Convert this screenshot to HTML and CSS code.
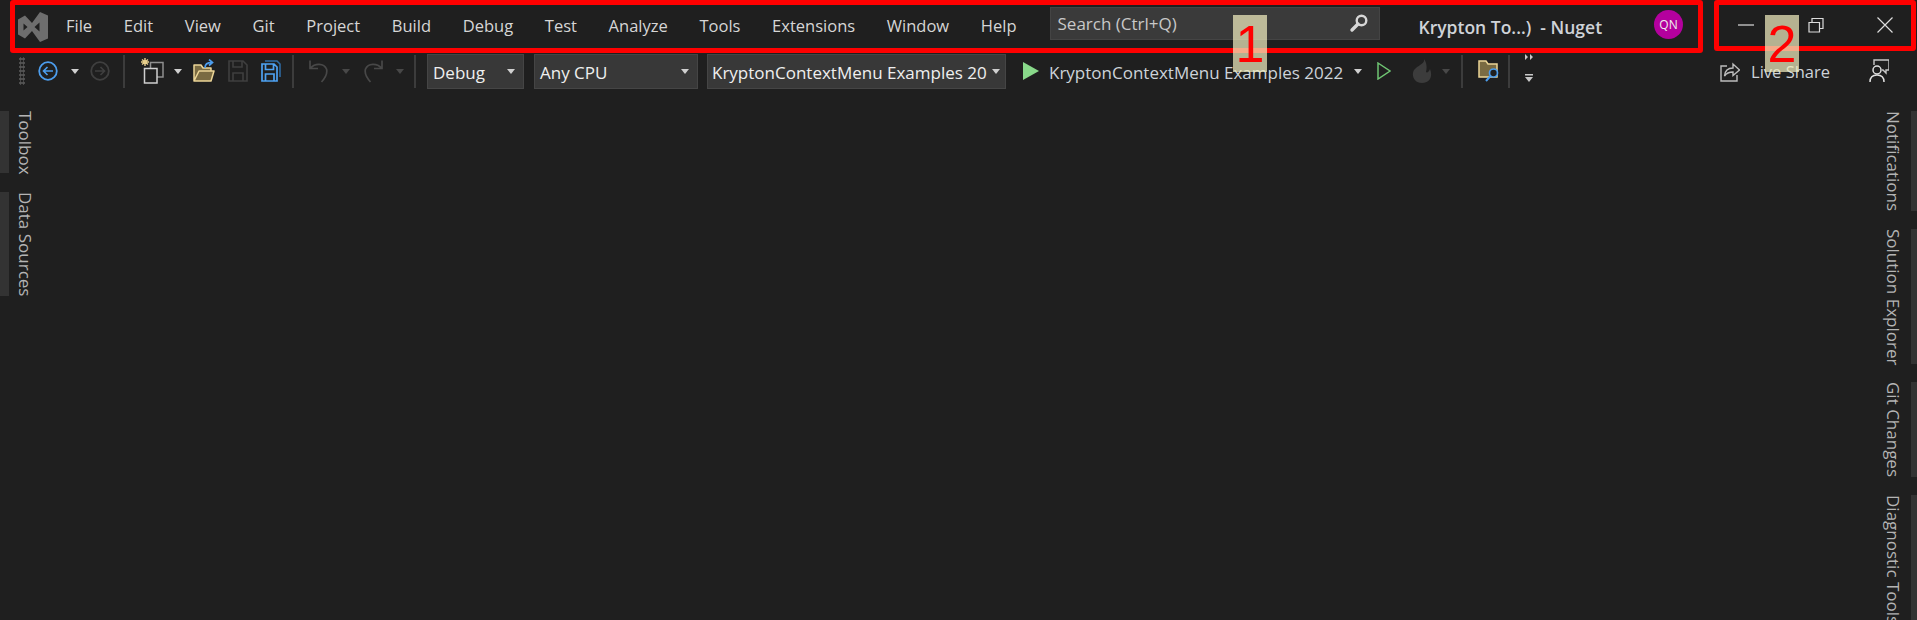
FILE: index.html

```html
<!DOCTYPE html>
<html lang="en">
<head>
    <meta charset="UTF-8">
    <meta name="viewport" content="width=device-width, initial-scale=1.0">
    <title>Krypton Toolkit - Nuget</title>
    <link rel="stylesheet" href="styles.css">
</head>
<body>
    <header class="titlebar">
        <svg class="logo" width="30" height="30" viewBox="0 0 30 30">
            <path fill="#6e6e6e" fill-rule="evenodd" d="M0 7.5 7 3.5 14 11 22 0 30 3.5V26.500L22 30 14 19 7 26.500 0 22.500ZM5.500 11.500V18.500L9.500 15ZM21.500 10.500 16.500 15 21.500 19.500Z"/>
        </svg>
        <nav class="menu">
            <span>File</span>
            <span>Edit</span>
            <span>View</span>
            <span>Git</span>
            <span>Project</span>
            <span>Build</span>
            <span>Debug</span>
            <span>Test</span>
            <span>Analyze</span>
            <span>Tools</span>
            <span>Extensions</span>
            <span>Window</span>
            <span>Help</span>
        </nav>
        <div class="search">
            <span>Search (Ctrl+Q)</span>
            <svg width="20" height="20" viewBox="0 0 20 20">
                <circle cx="12.500" cy="7.500" r="4.800" fill="none" stroke="#d6d6d6" stroke-width="2.400"/>
                <path d="M9 11 3 17" stroke="#d6d6d6" stroke-width="3.400" stroke-linecap="round"/>
            </svg>
        </div>
        <div class="doc-title">Krypton To...)&nbsp;&nbsp;- Nuget</div>
        <div class="avatar">QN</div>
        <div class="win-controls">
            <svg width="16" height="16" viewBox="0 0 16 16"><path d="M0 8H16" stroke="#dcdcdc" stroke-width="1.200"/></svg>
            <svg width="16" height="16" viewBox="0 0 16 16"><path d="M1 5.500H11.500V15H1ZM4 5.500V1.500H15V11.500H11.500" fill="none" stroke="#dcdcdc" stroke-width="1.200"/></svg>
            <svg width="16" height="16" viewBox="0 0 16 16"><path d="M0.500 0.500 15.500 15.500M15.500 0.500 0.500 15.500" stroke="#dcdcdc" stroke-width="1.200"/></svg>
        </div>
    </header>

    <div class="toolbar">
        <div class="grip"></div>
        <svg width="20" height="20" viewBox="0 0 20 20">
            <circle cx="10" cy="10" r="8.800" fill="none" stroke="#4c9ded" stroke-width="1.800"/>
            <path d="M15 10H6M9.500 6 5.500 10 9.500 14" fill="none" stroke="#4c9ded" stroke-width="1.600"/>
        </svg>
        <i class="caret"></i>
        <svg class="near" width="20" height="20" viewBox="0 0 20 20">
            <circle cx="10" cy="10" r="8.800" fill="none" stroke="#3f3f3f" stroke-width="1.800"/>
            <path d="M5 10H14M10.500 6 14.500 10 10.500 14" fill="none" stroke="#3f3f3f" stroke-width="1.600"/>
        </svg>
        <div class="sep"></div>
        <svg class="far" width="24" height="26" viewBox="0 0 24 26">
            <path d="M5 0V8M1 4H9M2 1.500 8 6.500M8 1.500 2 6.500" stroke="#e8cf8c" stroke-width="1.400"/>
            <path d="M10.500 4.500H23V19H10.500Z" fill="none" stroke="#8f8f8f" stroke-width="1.500"/>
            <path d="M4.500 10.500H17V25H4.500Z" fill="#1f1f1f" stroke="#cfcfcf" stroke-width="1.500"/>
        </svg>
        <i class="caret nearer"></i>
        <svg class="near" width="22" height="24" viewBox="0 0 22 24">
            <path d="M1 22V6H8L10 9H18V12H6L1 22H18L21 12H6" fill="#7a6b42" stroke="#ecd596" stroke-width="1.500" stroke-linejoin="round"/>
            <path d="M12 9C12 5 14 3.500 19 3.500M16 0.500 19.500 3.500 16 6.500" fill="none" stroke="#4c9ded" stroke-width="1.700"/>
        </svg>
        <svg width="20" height="22" viewBox="0 0 20 22">
            <path d="M1 1H15L19 5V21H1ZM5 1V7H14V1M5 21V13H15V21" fill="none" stroke="#3f3f3f" stroke-width="1.600"/>
        </svg>
        <svg width="20" height="22" viewBox="0 0 20 22">
            <path d="M4 1H16L19 4V17" fill="none" stroke="#2f6ea8" stroke-width="1.500"/>
            <path d="M1 4H13L16 7V21H1ZM4.500 4V9.500H12.500V4M4.500 21V14H13V21" fill="none" stroke="#4ea2f2" stroke-width="1.700"/>
        </svg>
        <div class="sep near"></div>
        <svg class="far" width="20" height="24" viewBox="0 0 20 24">
            <path d="M1 1.500V9.500H9M1.500 9C6 4 15 4 17.500 10C19 15 16 19 12.500 23" fill="none" stroke="#484848" stroke-width="1.700"/>
        </svg>
        <i class="caret dim"></i>
        <svg width="20" height="24" viewBox="0 0 20 24">
            <path d="M19 1.500V9.500H11M18.500 9C14 4 5 4 2.500 10C1 15 4 19 7.500 23" fill="none" stroke="#484848" stroke-width="1.700"/>
        </svg>
        <i class="caret dim"></i>
        <div class="sep nearer"></div>
        <div class="combo combo-debug near"><span>Debug</span><i class="caret"></i></div>
        <div class="combo combo-cpu nearer"><span>Any CPU</span><i class="caret"></i></div>
        <div class="combo combo-project nearest"><span>KryptonContextMenu Examples 20</span><i class="caret"></i></div>
        <svg class="farther" width="16" height="18" viewBox="0 0 16 18"><path d="M0 0 16 9 0 18Z" fill="#89d98a"/></svg>
        <span class="run-target nearer">KryptonContextMenu Examples 2022</span>
        <i class="caret near"></i>
        <svg class="far" width="14" height="18" viewBox="0 0 14 18"><path d="M1 1 13 9 1 17Z" fill="none" stroke="#6fc573" stroke-width="1.500"/></svg>
        <svg class="farthest" width="20" height="24" viewBox="0 0 20 24">
            <path d="M12 0C13 5 6 6 2 11C-1 16 2 24 10 24C18 24 21 17 18 10C17 13 15 14 14 13C15 9 15 4 12 0Z" fill="#3c3c3c"/>
        </svg>
        <i class="caret dim nearer"></i>
        <div class="sep near"></div>
        <svg class="far" width="22" height="24" viewBox="0 0 22 24">
            <path d="M1 18V2H8L10 5H19V18Z" fill="#7a6b42" stroke="#ecd596" stroke-width="1.500"/>
            <circle cx="15.500" cy="14" r="4" fill="#1f1f1f" stroke="#4c9ded" stroke-width="1.700"/>
            <path d="M12.500 17 8 22" stroke="#4c9ded" stroke-width="2"/>
        </svg>
        <div class="sep tightest"></div>
        <div class="overflow far">
            <svg width="8" height="6" viewBox="0 0 8 6"><path d="M0 0 3 3 0 6ZM5 0 8 3 5 6Z" fill="#c8c8c8"/></svg>
            <svg width="8" height="10" viewBox="0 0 8 10"><path d="M0 0H8V1.500H0ZM0 3H8L4 8Z" fill="#c8c8c8"/></svg>
        </div>
        <div class="share">
            <svg width="20" height="22" viewBox="0 0 20 22">
                <path d="M7 6H1V21H17V15M4.500 16C5 10 9 8 13 8V4L19.500 10 13 15.500V12C9 12 6.500 13 4.500 16Z" fill="none" stroke="#bdbdbd" stroke-width="1.400"/>
            </svg>
            <span>Live Share</span>
        </div>
        <svg class="feedback" width="20" height="24" viewBox="0 0 20 24">
            <path d="M5 6V1H20V11H17V14L14 11H13" fill="none" stroke="#c8c8c8" stroke-width="1.400"/>
            <circle cx="8" cy="11" r="4" fill="none" stroke="#e0e0e0" stroke-width="1.500"/>
            <path d="M1 23C1 18 4 16 8 16C12 16 15 18 15 23" fill="none" stroke="#e0e0e0" stroke-width="1.500"/>
        </svg>
    </div>

    <main class="workspace">
        <aside class="rail">
            <div class="side-tab tab-toolbox"><i></i><span>Toolbox</span></div>
            <div class="side-tab tab-sources"><i></i><span>Data Sources</span></div>
        </aside>
        <aside class="rail rail-right">
            <div class="side-tab tab-notify"><span>Notifications</span><i></i></div>
            <div class="side-tab tab-solution"><span>Solution Explorer</span><i></i></div>
            <div class="side-tab tab-git"><span>Git Changes</span><i></i></div>
            <div class="side-tab tab-diag"><span>Diagnostic Tools</span><i></i></div>
        </aside>
    </main>

    <!-- annotations drawn on top of the screenshot -->
    <div class="mark mark-one"></div>
    <div class="mark mark-two"></div>
    <div class="tag tag-one">1</div>
    <div class="tag tag-two">2</div>
</body>
</html>
```

FILE: styles.css

```css
* {
    box-sizing: border-box;
}
html, body {
    height: 100%;
}
body {
    margin: 0;
    position: relative;
    overflow: hidden;
    display: flex;
    flex-direction: column;
    background-color: #1f1f1f;
    color: #d6d6d6;
    font-family: "Open Sans", "Noto Sans", sans-serif;
    font-size: 16.5px;
}
svg {
    display: block;
    flex: none;
}

/* title bar */
.titlebar {
    height: 52px;
    flex: none;
    display: flex;
    align-items: center;
    padding-left: 18px;
}
.logo {
    margin-top: 1px;
}
.menu {
    display: flex;
    gap: 31.700px;
    margin-left: 18px;
    margin-bottom: 1px;
}
.search {
    width: 330px;
    height: 33px;
    margin: 0 0 5px 33px;
    padding: 0 10px 1px 7px;
    display: flex;
    align-items: center;
    justify-content: space-between;
    background-color: #3a3a3a;
    border: 1px solid #444;
    color: #c8c8c8;
    font-size: 17px;
}
.doc-title {
    margin-left: 39px;
    margin-top: 2px;
    font-size: 17.500px;
    font-weight: 600;
    color: #cfd3d8;
}
.avatar {
    width: 29px;
    height: 29px;
    margin: 0 0 4px auto;
    border-radius: 50%;
    display: flex;
    align-items: center;
    justify-content: center;
    background-color: #b4009e;
    color: #eee;
    font-size: 12px;
}
.win-controls {
    width: 234px;
    margin-bottom: 3px;
    padding: 0 24px 0 55px;
    display: flex;
    justify-content: space-between;
}

/* toolbar */
.toolbar {
    height: 38px;
    flex: none;
    display: flex;
    align-items: center;
    gap: 13px;
    padding: 0 28px 0 19px;
    font-size: 17px;
}
.grip {
    width: 6px;
    height: 28px;
    background-image: radial-gradient(#555 1px, transparent 1.500px);
    background-size: 3px 4px;
}
.caret {
    flex: none;
    width: 0;
    height: 0;
    border: 4px solid transparent;
    border-top: 5px solid #d0d0d0;
    border-bottom: 0;
}
.caret.dim {
    border-top-color: #484848;
}
.sep {
    width: 2px;
    height: 33px;
    flex: none;
    background-color: #3c3c3c;
}
.near {
    margin-left: -2px;
}
.nearer {
    margin-left: -3px;
}
.nearest {
    margin-left: -4px;
}
.tightest {
    margin-left: -5px;
}
.far {
    margin-left: 2px;
}
.farther {
    margin-left: 4px;
}
.farthest {
    margin-left: 8px;
}
.combo {
    height: 35px;
    flex: none;
    display: flex;
    align-items: center;
    justify-content: space-between;
    padding: 0 8px 0 5px;
    background-color: #383838;
    border: 1px solid #454545;
    color: #efefef;
    white-space: nowrap;
}
.combo span {
    padding-top: 2px;
}
.combo-debug {
    width: 97px;
}
.combo-cpu {
    width: 164px;
}
.combo-project {
    width: 299px;
    padding-left: 4px;
    padding-right: 5px;
}
.run-target {
    padding-top: 2px;
    white-space: nowrap;
    color: #cdd3d9;
}
.overflow {
    display: flex;
    flex-direction: column;
    gap: 14px;
    margin-top: -4px;
}
.share {
    margin-left: auto;
    display: flex;
    align-items: center;
    gap: 11px;
    color: #cdd3d9;
    font-size: 16.500px;
}
.feedback {
    margin-left: 26px;
}

/* docked tool windows */
.workspace {
    flex: 1;
    display: flex;
    justify-content: space-between;
    min-height: 0;
    overflow: hidden;
}
.rail {
    display: flex;
    flex-direction: column;
    padding-top: 21px;
}
.side-tab {
    display: flex;
    flex: none;
    gap: 7px;
    color: #b4b4b4;
    font-size: 17px;
}
.side-tab i {
    width: 9px;
    background-color: #333;
}
.side-tab span {
    writing-mode: vertical-rl;
    white-space: nowrap;
    line-height: 18px;
}
.tab-toolbox {
    height: 62px;
    margin-bottom: 19px;
}
.tab-sources {
    height: 104px;
}
.rail-right .side-tab {
    justify-content: flex-end;
    gap: 9px;
    margin-bottom: 18px;
}
.rail-right .side-tab i {
    width: 6px;
}
.tab-notify {
    height: 100px;
}
.tab-solution {
    height: 135px;
}
.tab-git {
    height: 95px;
}
.tab-diag {
    height: 160px;
}

/* annotations */
.mark {
    position: absolute;
    top: 0;
    border: 5px solid #f00;
    border-radius: 3px;
}
.mark-one {
    left: 10px;
    width: 1693px;
    height: 53px;
}
.mark-two {
    left: 1714px;
    width: 202px;
    height: 51px;
}
.tag {
    position: absolute;
    top: 15px;
    width: 34px;
    height: 57px;
    background-color: rgba(240, 235, 190, 0.72);
    color: #f00;
    font-family: "Liberation Sans", sans-serif;
    font-size: 52px;
    line-height: 58px;
    text-align: center;
}
.tag-one {
    left: 1233px;
}
.tag-two {
    left: 1765px;
}
```
